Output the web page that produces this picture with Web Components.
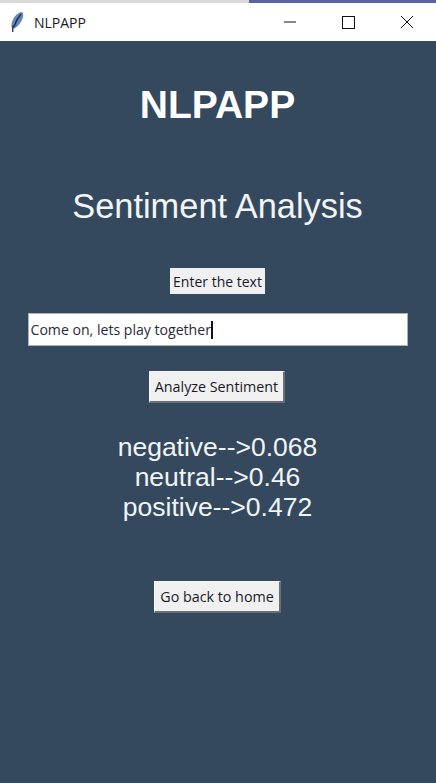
<!DOCTYPE html>
<html>
<head>
<meta charset="utf-8">
<title>NLPAPP</title>
<style>
  html, body { margin: 0; height: 100%; }
  body { width: 436px; height: 783px; overflow: hidden; }
</style>
</head>
<body>
<app-window title="NLPAPP">
  <big-title>NLPAPP</big-title>
  <sub-title>Sentiment Analysis</sub-title>
  <tk-label>Enter the text</tk-label>
  <tk-entry value="Come on, lets play together"></tk-entry>
  <tk-button style="margin:25px 1px 0 0;width:136px">Analyze Sentiment</tk-button>
  <result-lines>
    <div>negative--&gt;0.068</div>
    <div>neutral--&gt;0.46</div>
    <div>positive--&gt;0.472</div>
  </result-lines>
  <tk-button style="margin-top:59px;width:127px">Go back to home</tk-button>
</app-window>

<script>
const uiFont = `"Open Sans", "Noto Sans", sans-serif`;

class AppWindow extends HTMLElement {
  constructor() {
    super();
    this.attachShadow({ mode: "open" });
    this.shadowRoot.innerHTML = `
      <style>
        :host { display: flex; flex-direction: column; width: 436px; height: 783px; background: #fff; }
        .strip { display: flex; height: 3px; flex: none; }
        .strip .a { width: 249px; background: #d9d9d9; }
        .strip .b { flex: 1; background: #5664a4; }
        .bar { display: flex; align-items: center; height: 38px; flex: none; background: #fff; }
        .feather { width: 16px; height: 22px; margin-left: 9px; flex: none; }
        .name { margin-left: 9px; font: 14px ${uiFont}; color: #1a1a1a; flex: 1; }
        .ctl { width: 58px; height: 38px; display: flex; align-items: center; justify-content: center; flex: none; box-sizing: border-box; }
        .ctl.shift { padding-right: 2px; }
        .ctl svg { display: block; }
        main { flex: 1; display: flex; flex-direction: column; align-items: center; background: #34495e; padding-right: 1px; box-sizing: border-box; }
      </style>
      <div class="strip"><div class="a"></div><div class="b"></div></div>
      <div class="bar">
        <svg class="feather" viewBox="0 0 16 22">
          <path d="M13 .8C8 2 4.500 6 3 11c-.7 2.500-.7 4.500-.2 6.200l2.500.2C10 15 13 10 14 6c.5-2 .2-3.700-1-5.200z" fill="#6289bb"/>
          <path d="M12 3C9 6.500 6.500 11 4.800 16" fill="none" stroke="#1f2d45" stroke-width="1.400"/>
          <path d="M4.300 14.500C3.800 16.500 3.600 18.500 3.800 21" fill="none" stroke="#2b2f3a" stroke-width="1.300"/>
        </svg>
        <div class="name"></div>
        <div class="ctl shift"><svg width="14" height="2" viewBox="0 0 14 2"><path d="M1 1h12" stroke="#111" stroke-width="1"/></svg></div>
        <div class="ctl shift"><svg width="13" height="13" viewBox="0 0 13 13"><rect x=".5" y=".5" width="12" height="12" fill="none" stroke="#111"/></svg></div>
        <div class="ctl"><svg width="14" height="14" viewBox="0 0 14 14"><path d="M1 1l12 12M13 1L1 13" stroke="#111" stroke-width="1" fill="none"/></svg></div>
      </div>
      <main><slot></slot></main>
    `;
  }

  connectedCallback() {
    this.shadowRoot.querySelector(".name").textContent = this.getAttribute("title");
  }
}

class BigTitle extends HTMLElement {
  constructor() {
    super();
    this.attachShadow({ mode: "open" });
    this.shadowRoot.innerHTML = `
      <style>
        :host { display: block; margin-top: 41px; height: 46px; color: #fff;
          font: bold 39px/46px "Liberation Sans", Arial, sans-serif; }
      </style>
      <slot></slot>
    `;
  }
}

class SubTitle extends HTMLElement {
  constructor() {
    super();
    this.attachShadow({ mode: "open" });
    this.shadowRoot.innerHTML = `
      <style>
        :host { display: block; margin-top: 56px; color: #f2f4f5;
          font: 34.400px/44px "Liberation Sans", Arial, sans-serif; }
      </style>
      <slot></slot>
    `;
  }
}

class TkLabel extends HTMLElement {
  constructor() {
    super();
    this.attachShadow({ mode: "open" });
    this.shadowRoot.innerHTML = `
      <style>
        :host { display: flex; align-items: center; justify-content: center; box-sizing: border-box;
          width: 95px; height: 26px; margin-top: 40px; background: #f0f0f0; color: #1a1a2a;
          font: 14px ${uiFont}; white-space: nowrap; }
      </style>
      <slot></slot>
    `;
  }
}

class TkEntry extends HTMLElement {
  constructor() {
    super();
    this.attachShadow({ mode: "open" });
    this.shadowRoot.innerHTML = `
      <style>
        :host { display: flex; align-items: center; box-sizing: border-box; width: 380px; height: 33px;
          margin-top: 19px; padding-left: 2px; background: #fff; border: 1px solid #a9b1b9;
          color: #2a2a3a; font: 14.100px ${uiFont}; white-space: nowrap; }
        .caret { width: 2px; height: 18px; background: #10131c; flex: none; }
      </style>
      <span class="val"></span><span class="caret"></span>
    `;
  }

  connectedCallback() {
    this.shadowRoot.querySelector(".val").textContent = this.getAttribute("value");
  }
}

class TkButton extends HTMLElement {
  constructor() {
    super();
    this.attachShadow({ mode: "open" });
    this.shadowRoot.innerHTML = `
      <style>
        :host { display: flex; align-items: center; justify-content: center; box-sizing: border-box;
          height: 32px; background: #f0f0f0; color: #1a1a2a; font: 14.300px ${uiFont}; white-space: nowrap;
          border: 1px solid #f7f7f7; border-right: 2px solid #6a6f75; border-bottom: 2px solid #6a6f75; }
      </style>
      <slot></slot>
    `;
  }
}

class ResultLines extends HTMLElement {
  constructor() {
    super();
    this.attachShadow({ mode: "open" });
    this.shadowRoot.innerHTML = `
      <style>
        :host { display: block; margin-top: 29px; text-align: center; color: #f2f4f5;
          font: 26.500px/30px "Liberation Sans", Arial, sans-serif; }
      </style>
      <slot></slot>
    `;
  }
}

customElements.define("app-window", AppWindow);
customElements.define("big-title", BigTitle);
customElements.define("sub-title", SubTitle);
customElements.define("tk-label", TkLabel);
customElements.define("tk-entry", TkEntry);
customElements.define("tk-button", TkButton);
customElements.define("result-lines", ResultLines);
</script>
</body>
</html>
